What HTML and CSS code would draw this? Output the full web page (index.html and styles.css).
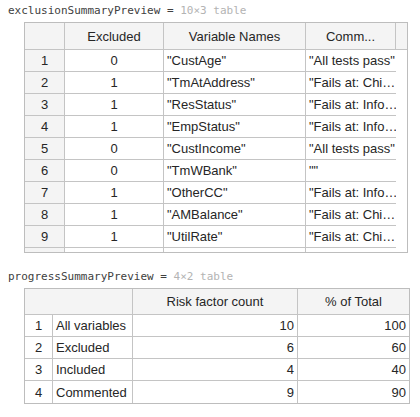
FILE: index.html
```html
<!DOCTYPE html>
<html>
<head>
<meta charset="utf-8">
<link rel="stylesheet" href="styles.css">
</head>
<body>
<div class="out">
  <div class="title">exclusionSummaryPreview = <span class="dim">10×3 table</span></div>
  <div class="frame frame-1">
    <table class="grid grid-1">
      <colgroup>
        <col class="c-idx1"><col class="c-excl"><col class="c-var"><col class="c-com"><col class="c-pad">
      </colgroup>
      <thead>
        <tr><th class="idx"></th><th>Excluded</th><th>Variable Names</th><th>Comm...</th><th class="pad"></th></tr>
      </thead>
      <tbody>
        <tr><td class="idx">1</td><td class="ctr">0</td><td>"CustAge"</td><td class="last">"All tests pass"</td><td class="pad"></td></tr>
        <tr><td class="idx">2</td><td class="ctr">1</td><td>"TmAtAddress"</td><td class="last">"Fails at: Chi…</td><td class="pad"></td></tr>
        <tr><td class="idx">3</td><td class="ctr">1</td><td>"ResStatus"</td><td class="last">"Fails at: Info…</td><td class="pad"></td></tr>
        <tr><td class="idx">4</td><td class="ctr">1</td><td>"EmpStatus"</td><td class="last">"Fails at: Info…</td><td class="pad"></td></tr>
        <tr><td class="idx">5</td><td class="ctr">0</td><td>"CustIncome"</td><td class="last">"All tests pass"</td><td class="pad"></td></tr>
        <tr><td class="idx">6</td><td class="ctr">0</td><td>"TmWBank"</td><td class="last">""</td><td class="pad"></td></tr>
        <tr><td class="idx">7</td><td class="ctr">1</td><td>"OtherCC"</td><td class="last">"Fails at: Info…</td><td class="pad"></td></tr>
        <tr><td class="idx">8</td><td class="ctr">1</td><td>"AMBalance"</td><td class="last">"Fails at: Chi…</td><td class="pad"></td></tr>
        <tr><td class="idx">9</td><td class="ctr">1</td><td>"UtilRate"</td><td class="last">"Fails at: Chi…</td><td class="pad"></td></tr>
        <tr><td class="idx"></td><td class="ctr"></td><td></td><td class="last"></td><td class="pad"></td></tr>
      </tbody>
    </table>
  </div>

  <div class="title title-2">progressSummaryPreview = <span class="dim">4×2 table</span></div>
  <div class="frame frame-2">
    <table class="grid grid-2">
      <colgroup>
        <col class="c-idx2"><col class="c-name"><col class="c-risk"><col class="c-pct">
      </colgroup>
      <thead>
        <tr><th colspan="2"></th><th>Risk factor count</th><th class="end">% of Total</th></tr>
      </thead>
      <tbody>
        <tr><td class="num-idx">1</td><td class="rn">All variables</td><td class="num">10</td><td class="num end">100</td></tr>
        <tr><td class="num-idx">2</td><td class="rn">Excluded</td><td class="num">6</td><td class="num end">60</td></tr>
        <tr><td class="num-idx">3</td><td class="rn">Included</td><td class="num">4</td><td class="num end">40</td></tr>
        <tr class="final"><td class="num-idx">4</td><td class="rn">Commented</td><td class="num">9</td><td class="num end">90</td></tr>
      </tbody>
    </table>
  </div>
</div>
</body>
</html>
```

FILE: styles.css
```css
html, body {
  margin: 0;
  padding: 0;
  background: #ffffff;
}

.out {
  padding: 4px 0 0 8px;
}

.title {
  font-family: "DejaVu Sans Mono", "Liberation Mono", monospace;
  font-size: 11px;
  line-height: 14px;
  height: 14px;
  color: #404040;
  white-space: pre;
  margin-bottom: 4px;
}

.title .dim {
  color: #b3b3b3;
}

.title-2 {
  margin-top: 17px;
  margin-bottom: 4px;
}

.frame {
  margin-left: 16px;
  border: 1px solid #bdbdbd;
  box-sizing: content-box;
  overflow: hidden;
  background: #ffffff;
}

.frame-1 {
  width: 382px;
  height: 229px;
}

.frame-2 {
  width: 384px;
}

.grid {
  border-collapse: separate;
  border-spacing: 0;
  table-layout: fixed;
  font-family: "Liberation Sans", Arial, sans-serif;
  font-size: 13px;
  color: #262626;
}

.grid th,
.grid td {
  box-sizing: border-box;
  padding: 0 3px;
  white-space: nowrap;
  overflow: hidden;
  font-weight: normal;
  border-right: 1px solid #c4c4c4;
  border-bottom: 1px solid #c4c4c4;
}

.grid th {
  background: #f4f4f4;
  text-align: center;
}

.grid-1 { width: 382px; }
.grid-1 th { height: 27px; }
.grid-1 td { height: 22px; }

.c-idx1 { width: 40px; }
.c-excl { width: 99px; }
.c-var  { width: 142px; }
.c-com  { width: 90px; }
.c-pad  { width: 11px; }

.grid td.idx {
  background: #f4f4f4;
  text-align: center;
}

.grid td.ctr {
  text-align: center;
}

.grid td.last {
  border-right: none;
  padding-right: 0;
  text-overflow: clip;
}

.grid th.pad {
  border-right: none;
}

.grid td.pad {
  border: none;
  background: #ffffff;
}

.grid-2 { width: 384px; }
.grid-2 th { height: 26px; }
.grid-2 td { height: 22px; }

.c-idx2 { width: 28px; }
.c-name { width: 80px; }
.c-risk { width: 165px; }
.c-pct  { width: 111px; }

.grid td.num-idx {
  text-align: center;
}

.grid td.rn {
  text-align: left;
}

.grid td.num {
  text-align: right;
  padding-right: 3px;
}

.grid .end {
  border-right: none;
}

.grid-2 tr.final td {
  border-bottom: none;
}
```
